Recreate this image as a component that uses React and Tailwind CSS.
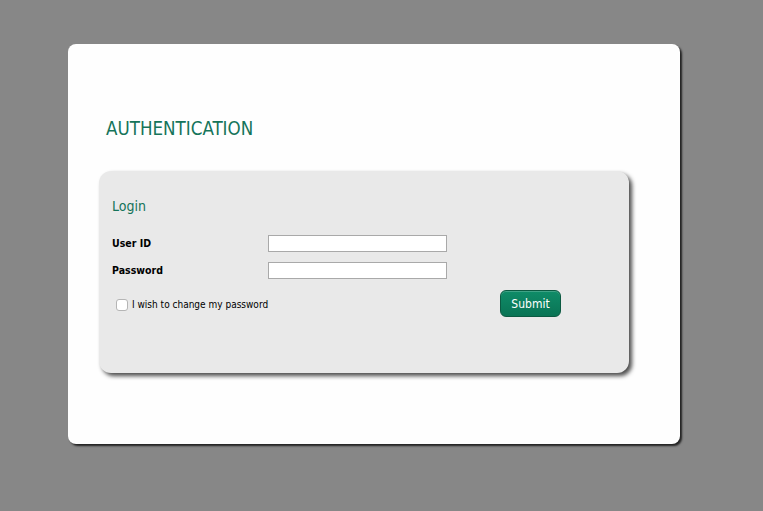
export default function App() {
  const font = { fontFamily: '"DejaVu Sans Condensed", "DejaVu Sans", Tahoma, sans-serif' };
  return (
    <div className="min-h-screen w-full bg-[#878787] pt-[44px] pl-[68px]" style={font}>
      <div className="w-[612px] h-[400px] bg-[#fefefe] rounded-[8px] shadow-[2px_2px_2px_rgba(0,0,0,0.75)] pt-[74px] pl-[31px]">
        <h1 className="ml-[7px] text-[18.6px] leading-[22px] text-[#15745a]">AUTHENTICATION</h1>
        <div className="mt-[31px] w-[530px] h-[202px] bg-[#e9e9e9] rounded-[12px] shadow-[3px_3px_4px_rgba(0,0,0,0.7)] pt-[26px] pl-[13px] pr-[68px]">
          <div className="text-[14px] leading-[18px] text-[#15745a]">Login</div>
          <div className="mt-[20px] flex items-center h-[17px]">
            <label className="w-[156px] text-[10.5px] font-bold text-black">User ID</label>
            <input className="w-[179px] h-[17px] bg-white border border-[#a9a9a9] outline-none" />
          </div>
          <div className="mt-[10px] flex items-center h-[17px]">
            <label className="w-[156px] text-[10.5px] font-bold text-black">Password</label>
            <input type="password" className="w-[179px] h-[17px] bg-white border border-[#a9a9a9] outline-none" />
          </div>
          <div className="mt-[11px] flex items-center justify-between">
            <label className="flex items-center gap-[4px] ml-[4px] mt-[2px] text-[10px] text-black">
              <span className="inline-block w-[12px] h-[12px] rounded-[3px] bg-white border border-[#b5b5b5]"></span>
              I wish to change my password
            </label>
            <button className="w-[61px] h-[27px] rounded-[6px] border border-[#0c5a42] bg-gradient-to-b from-[#0f8c68] to-[#0a7455] text-white text-[12px] shadow-[inset_0_1px_0_rgba(255,255,255,0.2)]">Submit</button>
          </div>
        </div>
      </div>
    </div>
  );
}
